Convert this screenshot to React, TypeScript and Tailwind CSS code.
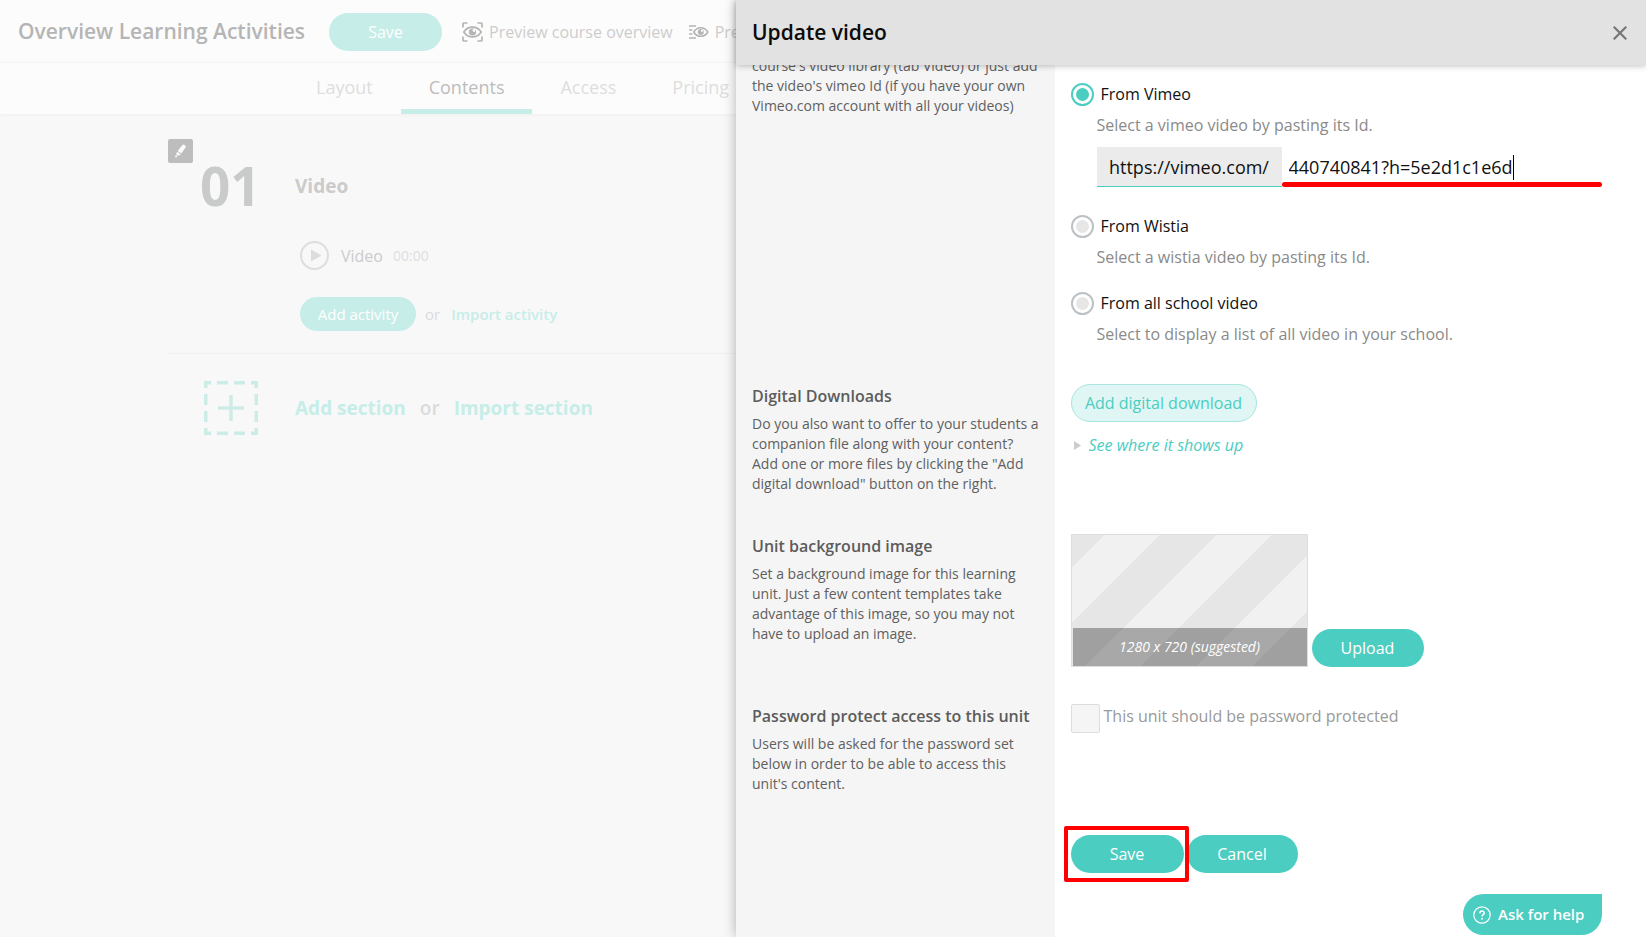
import React from "react";

const tabs = [
  { label: "Layout", active: false },
  { label: "Contents", active: true },
  { label: "Access", active: false },
  { label: "Pricing", active: false },
];

const FocusEyeIcon = () => (
  <svg width="21" height="20" viewBox="0 0 21 20" fill="none" stroke="#b4b4b4" strokeWidth="1.7" className="shrink-0">
    <path d="M1 5.5V1.800Q1 1 1.800 1H5.500M15.500 1H19.200Q20 1 20 1.800V5.500M20 14.500V18.200Q20 19 19.200 19H15.500M5.500 19H1.800Q1 19 1 18.200V14.500" />
    <path d="M1.800 10C6 3.400 15 3.400 19.200 10C15 16.600 6 16.600 1.800 10z" />
    <circle cx="10.500" cy="10" r="3.600" fill="#b4b4b4" stroke="none" />
    <circle cx="12" cy="8.500" r="1.400" fill="#fcfcfc" stroke="none" />
  </svg>
);

const ListEyeIcon = () => (
  <svg width="20" height="14" viewBox="0 0 20 14" fill="none" stroke="#b4b4b4" strokeWidth="1.6" className="shrink-0">
    <path d="M0 1h7M0 5h3.500M0 9h3.500M0 13h7" />
    <path d="M4.800 7C8 1.300 15.500 1.300 18.800 7C15.500 12.700 8 12.700 4.800 7z" />
    <circle cx="11.800" cy="7" r="3" fill="#b4b4b4" stroke="none" />
    <circle cx="13" cy="5.800" r="1.100" fill="#fcfcfc" stroke="none" />
  </svg>
);

const MarkerIcon = () => (
  <svg width="13" height="14" viewBox="0 0 13 14" fill="#fcfcfc">
    <path d="M8.300 1.200Q9 .3 10 .8L11.400 1.800Q12.300 2.600 11.600 3.500L7.200 9.600L3.600 7z" />
    <path d="M3.100 7.700L6.600 10.200L5.500 11.200L3.700 11.500L2.200 10.300z" />
    <path d="M1.900 11L3.300 12L2.700 13.200H.8z" />
  </svg>
);

const PlayIcon = () => (
  <svg width="29" height="29" viewBox="0 0 29 29">
    <circle cx="14.500" cy="14.500" r="13.500" fill="none" stroke="#dedede" strokeWidth="2" />
    <path d="M11 8.500L21.500 14.500L11 20.500z" fill="#dcdcdc" />
  </svg>
);

const AddBoxIcon = () => (
  <svg width="54" height="54" viewBox="0 0 54 54" fill="none" stroke="#cdece8" strokeWidth="3.500" className="shrink-0">
    <path d="M1.750 7V1.750H7M47 1.750h5.250V7M52.250 47v5.250H47M7 52.250H1.750V47" />
    <path d="M13 1.750h11M30 1.750h11M13 52.250h11M30 52.250h11M1.750 13v11M1.750 30v11M52.250 13v11M52.250 30v11" />
    <path d="M27 14v26M14 27h26" />
  </svg>
);

const HelpIcon = () => (
  <svg width="18" height="18" viewBox="0 0 18 18" fill="none" stroke="white" strokeWidth="1.200">
    <circle cx="9" cy="9" r="8.200" />
    <path d="M6.800 7.200C6.800 4.300 11.200 4.300 11.200 7C11.200 8.700 9 8.700 9 10.600" strokeWidth="1.500" />
    <circle cx="9" cy="12.800" r="1" fill="white" stroke="none" />
  </svg>
);

const CoursePage = () => (
  <div className="min-w-0 flex-1 overflow-hidden bg-[#f8f8f8]">
    <header className="flex h-[62px] items-center whitespace-nowrap bg-[#fcfcfc] pl-[18px] pt-0.5">
      <h1 className="w-[311px] shrink-0 text-[21px] font-semibold text-[#b5b5b5]">
        Overview Learning Activities
      </h1>
      <button className="h-[38px] w-[113px] shrink-0 rounded-full bg-[#c6ede8] text-base text-white">
        Save
      </button>
      <a href="#overview" className="ml-5 flex shrink-0 items-center gap-1.5 text-base text-[#cdcdcd]">
        <FocusEyeIcon />
        Preview course overview
      </a>
      <a href="#player" className="ml-4 flex shrink-0 items-center gap-1.5 text-base text-[#cdcdcd]">
        <ListEyeIcon />
        Pre
      </a>
    </header>

    <nav className="flex h-[52px] border-t border-[#f4f4f4] bg-[#fcfcfc] pl-[288px] text-lg shadow-[0_1px_4px_rgba(0,0,0,0.04)]">
      {tabs.map((tab) => (
        <a
          key={tab.label}
          href={"#" + tab.label}
          className={
            tab.active
              ? "border-b-[5px] border-[#c6ede8] px-7 pt-2.5 text-[#bdbdbd]"
              : "px-7 pt-2.5 text-[#dedede]"
          }
        >
          {tab.label}
        </a>
      ))}
    </nav>

    <main className="pl-[168px]">
      <section className="border-b border-[#f0f0f0] pb-[22px] pt-[25px]">
        <button aria-label="Edit section" className="flex h-6 w-[25px] items-center justify-center rounded-xs bg-[#bdbdbd]">
          <MarkerIcon />
        </button>
        <div className="flex h-[46px] items-center pl-8">
          <span className="w-[95px] text-[53px] font-bold text-[#c9cbcb]">01</span>
          <h2 className="text-[19px] font-bold text-[#cbcbcb]">Video</h2>
        </div>
        <div className="mt-8 flex items-center pl-[132px]">
          <PlayIcon />
          <span className="ml-3 text-base text-[#cbcbcb]">Video</span>
          <span className="ml-2.5 text-sm text-[#dedede]">00:00</span>
        </div>
        <div className="mt-[27px] flex items-center pl-[132px] text-[15px]">
          <button className="h-[34px] w-[116px] rounded-full bg-[#c6ede8] text-white">
            Add activity
          </button>
          <span className="ml-[9px] text-[#dbdbdb]">or</span>
          <a href="#import-activity" className="ml-[11px] font-semibold text-[#c6ede8]">
            Import activity
          </a>
        </div>
      </section>

      <section className="flex items-center pl-9 pt-[27px] text-[19px] font-bold">
        <AddBoxIcon />
        <a href="#add-section" className="ml-[37px] text-[#c6ede8]">
          Add section
        </a>
        <span className="ml-3.5 font-semibold text-[#dbdbdb]">or</span>
        <a href="#import-section" className="ml-3.5 text-[#c6ede8]">
          Import section
        </a>
      </section>
    </main>
  </div>
);

const Row = ({
  title,
  text,
  className,
  children,
}: {
  title: string;
  text: string;
  className: string;
  children: React.ReactNode;
}) => (
  <div className="flex">
    <div className={"w-[35%] shrink-0 bg-[#f5f5f5] pl-4 pr-3 " + className}>
      <h3 className="text-base font-semibold text-[#5c5c5c]">{title}</h3>
      <p className="mt-1.5 text-sm leading-5 text-[#5f6060]">{text}</p>
    </div>
    <div className="flex-1 pl-4">{children}</div>
  </div>
);

const Source = ({
  id,
  label,
  hint,
  checked,
  children,
}: {
  id: string;
  label: string;
  hint: string;
  checked?: boolean;
  children?: React.ReactNode;
}) => (
  <div>
    <div className="flex h-6 items-center gap-[7px]">
      <input
        type="radio"
        name="source"
        id={id}
        defaultChecked={checked}
        className="size-[23px] appearance-none rounded-full border-2 border-[#bcc1c5] bg-[#e6e6e6] bg-clip-content p-[3px] checked:border-[#4bcdc1] checked:bg-[#4bcdc1]"
      />
      <label htmlFor={id} className="text-base text-[#111111]">
        {label}
      </label>
    </div>
    <div className="ml-[26px] mt-[7px] text-base leading-6 text-[#8a8a8a]">{hint}</div>
    {children}
  </div>
);

const UpdateVideoPanel = () => (
  <aside className="relative z-10 flex w-[910px] max-w-full shrink-0 flex-col bg-white shadow-[0_0_12px_rgba(0,0,0,0.3)]">
    <header className="z-10 flex h-[65px] shrink-0 items-center justify-between bg-[#e2e2e2] pl-4 pr-[19px] shadow-[0_1px_6px_rgba(0,0,0,0.25)]">
      <h2 className="text-[21px] font-semibold text-[#0a0a0a]">Update video</h2>
      <button aria-label="Close">
        <svg width="14" height="14" viewBox="0 0 14 14" stroke="#777777" strokeWidth="2.200">
          <path d="M.7 .7L13.300 13.300M13.300 .7L.7 13.300" />
        </svg>
      </button>
    </header>

    <div className="flex">
      <p className="w-[35%] shrink-0 bg-[#f5f5f5] pl-4 pr-3 text-sm leading-5 text-[#5f6060]">
        <span className="-mt-[9px] block">
          course's video library (tab Video) or just add the video's vimeo Id (if you have your own
          Vimeo.com account with all your videos)
        </span>
      </p>
      <div className="flex flex-1 flex-col gap-[22px] pb-[38px] pl-4 pt-[17px]">
        <Source id="vimeo" label="From Vimeo" hint="Select a vimeo video by pasting its Id." checked>
          <div className="mb-[5px] ml-[26px] mr-11 mt-2.5 flex h-10 text-lg text-[#111111]">
            <label
              htmlFor="vimeo-id"
              className="flex w-[185px] items-center justify-center border-b border-[#4bcdc1] bg-[#ebebeb]"
            >
              https://vimeo.com/
            </label>
            <div className="relative flex flex-1 items-center pl-[7px]">
              <input
                id="vimeo-id"
                defaultValue="440740841?h=5e2d1c1e6d"
                className="field-sizing-content outline-none"
              />
              <span className="h-[25px] w-px bg-black" />
              <span className="absolute inset-x-0 bottom-0 h-[5px] rounded-full bg-[#ff0000]" />
            </div>
          </div>
        </Source>
        <Source id="wistia" label="From Wistia" hint="Select a wistia video by pasting its Id." />
        <Source
          id="school"
          label="From all school video"
          hint="Select to display a list of all video in your school."
        />
      </div>
    </div>

    <Row
      title="Digital Downloads"
      text={'Do you also want to offer to your students a companion file along with your content? Add one or more files by clicking the "Add digital download" button on the right.'}
      className="pb-10"
    >
      <button className="h-[38px] w-[186px] rounded-full border border-[#a9e6df] bg-[#e0f6f4] text-base text-[#4bcdc1]">
        Add digital download
      </button>
      <details className="mt-[11px]">
        <summary className="flex items-center gap-2 pl-[3px] text-base italic text-[#4bcdc1]">
          <svg width="7" height="9" viewBox="0 0 7 9" fill="#cccccc">
            <path d="M0 0L7 4.500L0 9z" />
          </svg>
          See where it shows up
        </summary>
      </details>
    </Row>

    <Row
      title="Unit background image"
      text="Set a background image for this learning unit. Just a few content templates take advantage of this image, so you may not have to upload an image."
      className="pb-[60px]"
    >
      <div className="flex items-end gap-1">
        <div className="flex h-[133px] w-[237px] flex-col justify-end border border-[#dddddd] bg-[repeating-linear-gradient(135deg,#e6e6e6_0px,#e6e6e6_23px,#f1f1f1_23px,#f1f1f1_62px,#e6e6e6_62px,#e6e6e6_79px)] pl-px">
          <div className="flex h-[38px] items-center justify-center bg-black/30 text-sm italic text-white">
            1280 x 720 (suggested)
          </div>
        </div>
        <button className="h-[38px] w-[112px] rounded-full bg-[#4bcdc1] text-base text-white">
          Upload
        </button>
      </div>
    </Row>

    <Row
      title="Password protect access to this unit"
      text="Users will be asked for the password set below in order to be able to access this unit's content."
      className="pb-[41px]"
    >
      <div className="flex items-start gap-1">
        <input
          type="checkbox"
          id="protect"
          className="size-[29px] appearance-none rounded-xs border border-[#dddddd] bg-[#f5f5f5]"
        />
        <label htmlFor="protect" className="text-base text-[#999999]">
          This unit should be password protected
        </label>
      </div>
    </Row>

    <div className="flex grow">
      <div className="w-[35%] shrink-0 bg-[#f5f5f5]" />
      <div className="flex flex-1 items-start gap-[3px] pl-4">
        <div className="relative">
          <button className="h-[38px] w-[113px] rounded-full bg-[#4bcdc1] text-base text-white">
            Save
          </button>
          <span className="pointer-events-none absolute -inset-y-[9px] -left-[7px] -right-[5px] z-10 rounded-xs border-4 border-[#ff0000]" />
        </div>
        <button className="h-[38px] w-[111px] rounded-full bg-[#4bcdc1] text-base text-white">
          Cancel
        </button>
      </div>
    </div>

    <button className="absolute bottom-0.5 right-11 flex h-[41px] w-[139px] items-center gap-[7px] rounded-full rounded-tr-sm bg-[#4bcdc1] pl-2.5 text-[15px] font-semibold text-white">
      <HelpIcon />
      Ask for help
    </button>
  </aside>
);

const App = () => (
  <div className="flex min-h-screen font-['Open_Sans',sans-serif]">
    <CoursePage />
    <UpdateVideoPanel />
  </div>
);

export default App;
